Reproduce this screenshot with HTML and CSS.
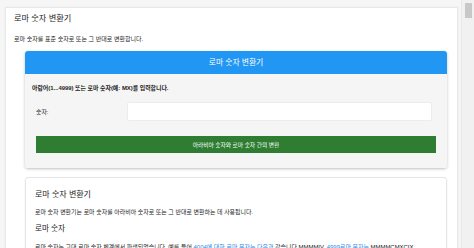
FILE: index.html
```html
<!DOCTYPE html>
<html lang="ko">

<head>
  <meta charset="UTF-8">
  <meta name="viewport" content="width=device-width, initial-scale=1.0">
  <title>로마 숫자 변환기</title>
  <link rel="stylesheet" href="styles.css">
</head>

<body>
  <div class="page">
    <div class="container">
      <h1 class="page-title">로마 숫자 변환기</h1>
      <p class="page-desc">로마 숫자를 표준 숫자로 또는 그 반대로 변환합니다.</p>

      <div class="tool-card">
        <div class="tool-header">로마 숫자 변환기</div>
        <form class="tool-body" id="romanForm">
          <p class="tool-hint">아랍어(1...4999) 또는 로마 숫자(예: MX)를 입력합니다.</p>
          <div class="form-row">
            <label for="numInput" class="form-label">숫자:</label>
            <input type="text" id="numInput" class="form-input">
          </div>
          <button type="submit" class="convert-btn">아라비아 숫자와 로마 숫자 간의 변환</button>
        </form>
      </div>

      <div class="info-card">
        <h2 class="info-title">로마 숫자 변환기</h2>
        <p class="info-text">로마 숫자 변환기는 로마 숫자를 아라비아 숫자로 또는 그 반대로 변환하는 데 사용됩니다.</p>
        <h3 class="info-subtitle">로마 숫자</h3>
        <p class="info-text last">로마 숫자는 고대 로마 숫자 체계에서 파생되었습니다. 예를 들어 <a href="#">4004에 대한 로마 문자는 다음과</a> 같습니다 MMMMIV, <a href="#">4999로마 문자는</a> MMMMCMXCIX</p>
      </div>
    </div>
  </div>
  <div class="scrollbar">
    <div class="scroll-thumb"></div>
  </div>
</body>

</html>
```

FILE: styles.css
```css
html,
body {
  margin: 0;
  height: 248px;
  overflow: hidden;
}

body {
  display: flex;
  background-color: #f6f6f6;
  font-family: "Liberation Sans", "Noto Sans CJK KR", sans-serif;
  color: #222;
}

.page {
  flex: 1;
  padding: 7px 3px 0 5px;
}

.container {
  background-color: #fff;
  border: 1px solid #e8e8e8;
  box-shadow: 0 0 2px rgba(0, 0, 0, 0.06);
  padding: 5px 10px 20px 8px;
  height: 300px;
}

.page-title {
  margin: 0;
  font-size: 8.2px;
  font-weight: normal;
  line-height: 12px;
}

.page-desc {
  margin: 10px 0 8px;
  font-size: 6px;
  line-height: 8px;
}

.tool-card {
  margin-left: 11px;
  border-radius: 3px;
  box-shadow: 0 1px 3px rgba(0, 0, 0, 0.25);
}

.tool-header {
  height: 23px;
  line-height: 23px;
  background-color: #2196f3;
  color: #fff;
  text-align: center;
  font-size: 7.8px;
  border-radius: 3px 3px 0 0;
}

.tool-body {
  background-color: #f5f5f5;
  padding: 10px 7px 15px;
  border-radius: 0 0 3px 3px;
}

.tool-hint {
  margin: 0 0 10px;
  font-size: 5.9px;
  font-weight: bold;
  line-height: 8px;
}

.form-row {
  display: flex;
  align-items: center;
  padding: 0 8px 0 4px;
}

.form-label {
  width: 91px;
  font-size: 5.9px;
}

.form-input {
  flex: 1;
  height: 19px;
  box-sizing: border-box;
  border: 1px solid #ececec;
  border-radius: 2px;
  background-color: #fff;
}

.convert-btn {
  display: block;
  width: calc(100% - 8px);
  margin: 15px 4px 0;
  height: 17px;
  padding: 0;
  border: none;
  background-color: #2e7d32;
  color: #fff;
  font-family: inherit;
  font-size: 5.7px;
  cursor: pointer;
}

.info-card {
  margin: 9px 0 0 11px;
  padding: 11px 9px 9px;
  background-color: #fff;
  border: 1px solid #e6e6e6;
  border-radius: 3px;
  box-shadow: 0 1px 2px rgba(0, 0, 0, 0.08);
}

.info-title {
  margin: 0;
  font-size: 8px;
  font-weight: normal;
  line-height: 12px;
}

.info-text {
  margin: 7px 0;
  font-size: 5.95px;
  line-height: 8px;
}

.info-text.last {
  margin-top: 8px;
}

.info-text a {
  color: #1e88e5;
  text-decoration: none;
}

.info-subtitle {
  margin: 0;
  font-size: 7.6px;
  font-weight: normal;
  line-height: 12px;
}

.scrollbar {
  width: 12px;
  background-color: #f1f1f1;
  border-left: 1px solid #e8e8e8;
  padding-top: 3px;
}

.scroll-thumb {
  width: 7px;
  height: 15px;
  margin-left: 3px;
  background-color: #c8c8c8;
}
```
